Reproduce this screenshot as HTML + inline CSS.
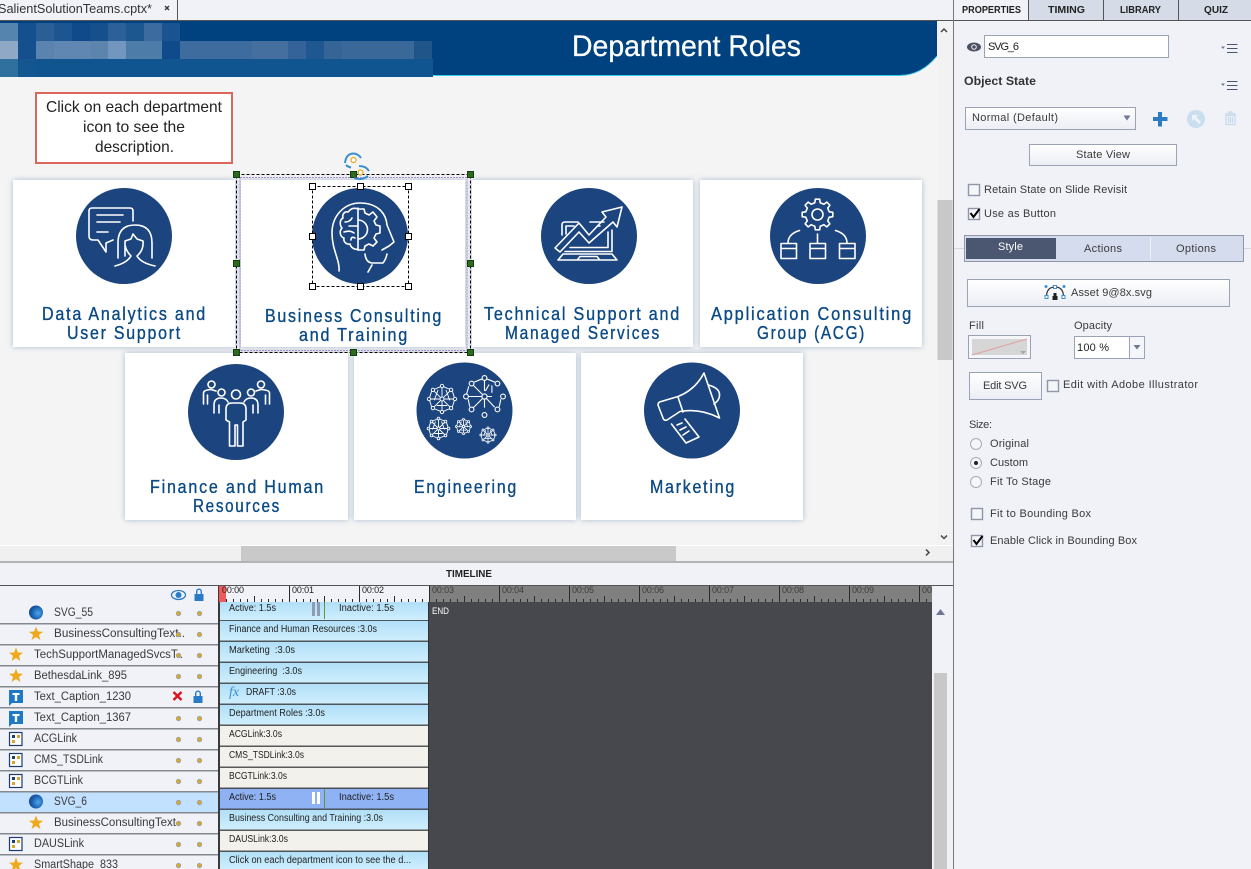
<!DOCTYPE html>
<html><head><meta charset="utf-8"><title>Department Roles</title>
<style>
html,body{margin:0;padding:0;width:1251px;height:869px;overflow:hidden;background:#f0f2f8}
svg{display:block}
text{font-family:"Liberation Sans",sans-serif;fill:#333;font-size:11px;white-space:pre}
.h{font-size:18px;fill:#0b4a85;letter-spacing:2px;stroke:#0b4a85;stroke-width:.35px}
.t{font-size:10px;fill:#222}
.l{font-size:11.5px;fill:#3a3a3a}
.p{font-size:11px;fill:#3a3a3a}
.tab{font-size:10px;font-weight:bold;fill:#222}
.i{fill:none;stroke:#fff;stroke-width:1.6;stroke-linejoin:round;stroke-linecap:round}
.card{fill:#fff;filter:drop-shadow(0 0 3px #a8bbd0)}
.hw{fill:#fff;stroke:#000;stroke-width:1}
.hg{fill:#2c6a1e;stroke:#143d10;stroke-width:1}
.d{fill:#e0a820;stroke:#8fa3b8;stroke-width:.8}
.btn{fill:url(#btn);stroke:#9aa3b5;stroke-width:1}
.cb{fill:#f5f6fa;stroke:#8f96a8;stroke-width:1.4}
</style></head><body>
<svg width="1251" height="869" viewBox="0 0 1251 869" xmlns="http://www.w3.org/2000/svg">
<defs>
<linearGradient id="btn" x1="0" y1="0" x2="0" y2="1"><stop offset="0" stop-color="#ffffff"/><stop offset="1" stop-color="#eceef5"/></linearGradient>
<linearGradient id="bar" x1="0" y1="0" x2="0" y2="1"><stop offset="0" stop-color="#b0dff8"/><stop offset="1" stop-color="#cfeefd"/></linearGradient>
<radialGradient id="sph" cx=".65" cy=".55" r=".7"><stop offset="0" stop-color="#4fa6e6"/><stop offset=".6" stop-color="#1b63b5"/><stop offset="1" stop-color="#103f85"/></radialGradient>
<pattern id="ruler" x="219" y="586" width="70" height="16" patternUnits="userSpaceOnUse">
<path d="M.5 0V16M7.5 13V16M14.5 13V16M21.5 13V16M28.5 13V16M35.5 10V16M42.5 13V16M49.5 13V16M56.5 13V16M63.5 13V16" stroke="#2a2a2a" stroke-width="1" fill="none"/>
</pattern>
<path id="star" d="M0-7.5 1.9-2.5 7.1-2.3 3 .9 4.4 6 0 3-4.4 6-3 .9-7.1-2.3-1.9-2.5Z" fill="#efa91c"/>
<g id="cap"><rect x="0" y="0" width="14" height="13" fill="#1f78c6"/><path d="M0 13v3l3-3z" fill="#1f78c6"/><path d="M3.5 3h7v2h-2.3v6h-2.4v-6h-2.3z" fill="#fff"/></g>
<g id="box"><rect x=".5" y=".5" width="12.5" height="13" fill="#fff" stroke="#1c3d6e" stroke-width="1.2"/><rect x="3" y="3" width="3" height="3" fill="#1c3d6e"/><rect x="8" y="3" width="3" height="3" fill="#d8a72a"/><rect x="3" y="8" width="3" height="3" fill="#d8a72a"/></g>
<g id="net" fill="none" stroke="#fff">
<circle cx="0" cy="0" r="1.5"/><circle cx="0" cy="-10" r="1.3"/><circle cx="7" cy="-7" r="1.3"/><circle cx="10" cy="0" r="1.3"/><circle cx="7" cy="7" r="1.3"/><circle cx="0" cy="10" r="1.3"/><circle cx="-7" cy="7" r="1.3"/><circle cx="-10" cy="0" r="1.3"/><circle cx="-7" cy="-7" r="1.3"/>
<path d="M0-1.5V-8.7M1.1-1.1 6-6M1.5 0H8.7M1.1 1.1 6 6M0 1.5V8.7M-1.1 1.1-6 6M-1.5 0H-8.7M-1.100-1.100-6-6M-3-7-6 1M3-7 6 1M-4 5 4 5M-5.800-7.500-1.200-9.500M1.200-9.500 5.800-7.500M8-6 9.500-1.200M9.500 1.200 8 6M5.800 7.500 1.200 9.500M-1.200 9.500-5.800 7.500M-8 6-9.500 1.200M-9.500-1.200-8-6"/>
</g>
<g id="net2" fill="none" stroke="#fff">
<circle cx="0" cy="0" r="1.4"/><circle cx="0" cy="-10" r="1.3"/><circle cx="7" cy="-7" r="1.3"/><circle cx="10" cy="0" r="1.3"/><circle cx="7" cy="7" r="1.3"/><circle cx="0" cy="10" r="1.3"/><circle cx="-7" cy="7" r="1.3"/><circle cx="-10" cy="0" r="1.3"/><circle cx="-7" cy="-7" r="1.3"/>
<path d="M-1.300 0H-8.700M1.300 0H4M-6-6-1-1M1 1 5.500 5.800M-1 1-6 6M0 1.400V6M0-3V-8.700M4-6V-2M2.500-6.500 .5-3M-8.800 1.500-8 5.500M-5.500-7.800-1.300-9.500M-8.500-5.500-9.700-1.300M8.800 1.500 8 5.500M5.500-7.800 1.300-9.500"/>
</g>
<path id="lock" d="M-4.5-1h9v7h-9zM-3-1v-2.5a3 3 0 0 1 6 0V-1h-1.4v-2.5a1.6 1.6 0 0 0-3.2 0V-1z" fill="#2a7bc6"/>
</defs>

<!-- top tab bar -->
<rect x="0" y="0" width="953" height="20" fill="#f0f2f8"/>
<rect x="0" y="20" width="953" height="1" fill="#555"/>
<rect x="177" y="0" width="1" height="20" fill="#555"/>
<text x="-2" y="13" style="font-size:13px" textLength="154" lengthAdjust="spacingAndGlyphs">SalientSolutionTeams.cptx*</text>
<path d="M165 6l4 4m0-4l-4 4" stroke="#333" stroke-width="1.3"/>

<!-- stage -->
<rect x="0" y="21" width="937" height="525" fill="#f4f4f4"/>
<path d="M0 21H937V56Q921 75 900 75H0Z" fill="#00427f"/>
<path d="M433 75.500H900Q921 75.500 937 56" fill="none" stroke="#35cfe8" stroke-width=".9"/>
<!-- pixelated -->
<g>
<rect x="0" y="23" width="18" height="18" fill="#5585ae"/><rect x="18" y="23" width="18" height="18" fill="#14508e"/><rect x="36" y="23" width="18" height="18" fill="#2a5f96"/><rect x="54" y="23" width="18" height="18" fill="#1c5590"/><rect x="72" y="23" width="18" height="18" fill="#104a8a"/><rect x="90" y="23" width="18" height="18" fill="#154f8c"/><rect x="108" y="23" width="18" height="18" fill="#2d6099"/><rect x="126" y="23" width="18" height="18" fill="#1c5790"/><rect x="144" y="23" width="18" height="18" fill="#3c6c9f"/><rect x="162" y="23" width="18" height="18" fill="#1a5490"/>
<rect x="0" y="41" width="18" height="18" fill="#8fa8c6"/><rect x="18" y="41" width="18" height="18" fill="#154f8d"/><rect x="36" y="41" width="18" height="18" fill="#5b83af"/><rect x="54" y="41" width="36" height="18" fill="#5f87b2"/><rect x="90" y="41" width="18" height="18" fill="#5c84ad"/><rect x="108" y="41" width="18" height="18" fill="#7396bf"/><rect x="126" y="41" width="36" height="18" fill="#4e7ca9"/><rect x="162" y="41" width="18" height="18" fill="#0f4a8a"/>
<rect x="180" y="41" width="126" height="18" fill="#3f6c9f"/><rect x="252" y="41" width="36" height="18" fill="#456f9f"/><rect x="288" y="41" width="18" height="18" fill="#336399"/><rect x="306" y="41" width="18" height="18" fill="#1f5790"/><rect x="324" y="41" width="18" height="18" fill="#356596"/><rect x="342" y="41" width="72" height="18" fill="#3a6898"/><rect x="414" y="41" width="18" height="18" fill="#1f5589"/>
<rect x="0" y="59" width="18" height="18" fill="#30709f"/><rect x="18" y="59" width="18" height="18" fill="#14568f"/><rect x="36" y="59" width="397" height="18" fill="#105490"/>
</g>
<text x="572" y="56" style="font-size:30px;fill:#fff;stroke:#fff;stroke-width:.3px" textLength="229" lengthAdjust="spacingAndGlyphs">Department Roles</text>

<!-- caption -->
<rect x="36" y="93" width="196" height="70" fill="#fff" stroke="#d9675a" stroke-width="2"/>
<text x="46" y="112" style="font-size:16px;fill:#222" textLength="176" lengthAdjust="spacingAndGlyphs">Click on each department</text>
<text x="83" y="132" style="font-size:16px;fill:#222" textLength="102" lengthAdjust="spacingAndGlyphs">icon to see the</text>
<text x="95" y="152" style="font-size:16px;fill:#222" textLength="79" lengthAdjust="spacingAndGlyphs">description.</text>

<!-- cards -->
<rect class="card" x="13" y="180" width="222" height="167"/>
<rect class="card" x="241" y="180" width="224" height="167"/>
<rect class="card" x="472" y="180" width="221" height="167"/>
<rect class="card" x="700" y="180" width="222" height="167"/>
<rect class="card" x="125" y="353" width="223" height="167"/>
<rect class="card" x="354" y="353" width="222" height="167"/>
<rect class="card" x="581" y="353" width="222" height="167"/>

<g fill="#1c447e">
<circle cx="124" cy="236" r="48"/><circle cx="360" cy="236" r="48"/><circle cx="589" cy="236" r="48"/><circle cx="818" cy="236" r="48"/>
<circle cx="236" cy="412" r="48"/><circle cx="464.500" cy="410.500" r="48"/><circle cx="692" cy="410.500" r="48"/>
</g>

<!-- icon 1 -->
<g class="i">
<path d="M133 221V211Q133 208 130 208H92Q89 208 89 211V236Q89 240 93 240H98L106 252V243L113 240"/>
<path d="M97 215H123M97 222H120M97 232H108"/>
<path d="M118 258V243Q118 225 135 225Q152 225 152 243V258"/>
<path d="M125 256V241L131 239 133 234 137 239 143 241Q144 250 137 256 141 263 155 266M125 245Q126 251 131 256 127 263 115 266"/>
</g>
<!-- icon 2 -->
<g class="i">
<path d="M339 271C340 260 332 250 332 233 332 215 345 203 360 203 376 203 386 212 387 225L394 242 389 246 382 250"/>
<path d="M365 254Q366 263 373 263H383Q386 259 387 254M372 265 368 272"/>
<path d="M358 208V250M358 209C352 207 350 210 348 212 344 211 342 215 343 218 339 220 340 226 342 228 339 231 340 237 344 238 343 242 347 245 350 244 351 248 355 250 358 249"/>
<path d="M345 222Q350 222 352 218M344 232Q350 230 354 233M351 240Q351 236 355 238M349 226H358"/>
<path d="M358 209H364L365 213 369 215 373 212 377 217 374 221 376 225 380 226V233L376 234 374 238 377 242 373 246 369 244 365 246 364 250H358M358 220A9.500 9.500 0 0 1 358 239"/>
</g>
<!-- icon 3 -->
<g class="i">
<path d="M555 248 579 223 589 235 606 217 602 212 622 207 617 227 613 222 589 243 579 232 560 252Z"/>
<path d="M562 235V225Q562 222 565 222H578M590 222H604M612 230V251.500H565"/>
<path d="M566 234V226H574M598 226H600M608 232V247.500H570"/>
<path d="M558 260 563 254H612L617 260ZM578 259 580 256.500H597L599 259"/>
</g>
<!-- icon 4 -->
<g class="i">
<path transform="translate(817.500 214.500)" d="M11.700-2.700 15.300-2.200 15.300 2.200 11.700 2.700 10.200 6.400 12.400 9.300 9.300 12.400 6.400 10.200 2.700 11.700 2.200 15.300-2.200 15.300-2.700 11.700-6.400 10.200-9.300 12.400-12.400 9.300-10.200 6.400-11.700 2.700-15.300 2.200-15.300-2.200-11.700-2.700-10.200-6.400-12.400-9.300-9.300-12.400-6.400-10.200-2.700-11.700-2.200-15.300 2.200-15.300 2.700-11.700 6.400-10.200 9.300-12.400 12.400-9.300 10.200-6.400Z"/>
<circle cx="817.500" cy="214.500" r="5.500"/>
<path d="M781 243.500H796.500V258.500H781ZM781 248.500H796.500M810 243.500H825.500V258.500H810ZM810 248.500H825.500M839.500 243.500H855V258.500H839.500ZM839.500 248.500H855"/>
<path d="M817.500 234V243M799.500 230.500Q788 234 788 243M835.500 230.500Q847 234 847 243"/>
</g>
<!-- icon 5 -->
<g class="i" stroke-width="1.400">
<circle cx="236" cy="394.500" r="4.500"/><circle cx="221.500" cy="392.500" r="3.500"/><circle cx="251" cy="392.500" r="3.500"/><circle cx="211.500" cy="384.500" r="3.500"/><circle cx="261" cy="384.500" r="3.500"/>
<path d="M229.500 446V422L226 420V409Q226 403 232 403H240Q246 403 246 409V420L243 422V446H237.500V425H235V446Z"/>
<path d="M214 413V405Q214 398 221 398 226 398 228 402M219 413V405M258 413V405Q258 398 251 398 246 398 244 402M253 413V405"/>
<path d="M203.500 404V393Q203.500 390 211 389.500L216 391M207.500 404V395M269.500 404V393Q269.500 390 261 389.500L256 391M265.500 404V395"/>
</g>
<!-- icon 6 -->
<g stroke-width=".55">
<use href="#net2" transform="translate(484.500 396.500) scale(1.850)" stroke-width=".6"/>
<use href="#net" transform="translate(442 399) scale(1.300)" stroke-width=".7"/>
<use href="#net" transform="translate(438.500 428.500) scale(1)" stroke-width=".9"/>
<use href="#net" transform="translate(463.500 426.500) scale(.72)" stroke-width="1.100"/>
<use href="#net" transform="translate(488 435) scale(.72)" stroke-width="1.100"/>
</g>
<!-- icon 7 -->
<g class="i" stroke-width="1.700">
<path d="M659.500 402 678 396.500Q695 390 704 373L719.500 418Q700 408 680 411.500L667 420Q664 421 663 418L658 405Q658 403 659.500 402Z"/>
<path d="M678 397 683 412M708.500 385Q719 388 719.500 394 720 400 714 404"/>
<path d="M671.500 424 686 443 699 437 685 419M680 430 686 427M683 435 689 431M677 425 682 423"/>
</g>

<!-- card text -->
<text class="h" x="42" y="320" textLength="165" lengthAdjust="spacingAndGlyphs">Data Analytics and</text>
<text class="h" x="67" y="339" textLength="115" lengthAdjust="spacingAndGlyphs">User Support</text>
<text class="h" x="265" y="322" textLength="178" lengthAdjust="spacingAndGlyphs">Business Consulting</text>
<text class="h" x="299" y="341" textLength="110" lengthAdjust="spacingAndGlyphs">and Training</text>
<text class="h" x="484" y="320" textLength="197" lengthAdjust="spacingAndGlyphs">Technical Support and</text>
<text class="h" x="505" y="339" textLength="156" lengthAdjust="spacingAndGlyphs">Managed Services</text>
<text class="h" x="711" y="320" textLength="202" lengthAdjust="spacingAndGlyphs">Application Consulting</text>
<text class="h" x="757" y="339" textLength="109" lengthAdjust="spacingAndGlyphs">Group (ACG)</text>
<text class="h" x="150" y="493" textLength="175" lengthAdjust="spacingAndGlyphs">Finance and Human</text>
<text class="h" x="193" y="512" textLength="88" lengthAdjust="spacingAndGlyphs">Resources</text>
<text class="h" x="414" y="493" textLength="104" lengthAdjust="spacingAndGlyphs">Engineering</text>
<text class="h" x="650" y="493" textLength="86" lengthAdjust="spacingAndGlyphs">Marketing</text>

<!-- selection -->
<rect x="240" y="177.500" width="227" height="173" fill="none" stroke="#a78ccf" stroke-width="1" stroke-dasharray="2 1"/>
<rect x="236.500" y="174.500" width="234" height="178" fill="none" stroke="#000" stroke-width="1" stroke-dasharray="3 2"/>
<g class="hg">
<rect x="233.500" y="171.500" width="6" height="6"/><rect x="350.500" y="171.500" width="6" height="6"/><rect x="467.500" y="171.500" width="6" height="6"/><rect x="233.500" y="260.500" width="6" height="6"/><rect x="467.500" y="260.500" width="6" height="6"/><rect x="233.500" y="349.500" width="6" height="6"/><rect x="350.500" y="349.500" width="6" height="6"/><rect x="467.500" y="349.500" width="6" height="6"/>
</g>
<rect x="312.500" y="186.500" width="96" height="100" fill="none" stroke="#000" stroke-width="1" stroke-dasharray="3 2"/>
<g class="hw">
<rect x="309.500" y="183.500" width="6" height="6"/><rect x="357.500" y="183.500" width="6" height="6"/><rect x="405.500" y="183.500" width="6" height="6"/><rect x="309.500" y="233.500" width="6" height="6"/><rect x="405.500" y="233.500" width="6" height="6"/><rect x="309.500" y="283.500" width="6" height="6"/><rect x="357.500" y="283.500" width="6" height="6"/><rect x="405.500" y="283.500" width="6" height="6"/>
</g>
<!-- rotate -->
<g fill="none" stroke="#3d8fd0" stroke-width="2">
<path d="M345 163Q346 154 353 153.500Q358 153.500 361 158M346 165Q348 167 351 167.500M359 166Q366 166 369 171M354 178Q361 181 368 176"/>
</g>
<circle cx="353.500" cy="160" r="2.500" fill="#fff" stroke="#e0a820" stroke-width="1.200"/>
<circle cx="360.500" cy="172.500" r="2.500" fill="#fff" stroke="#e0a820" stroke-width="1.200"/>

<!-- scrollbars -->
<rect x="937" y="21" width="16" height="525" fill="#f2f2f2"/>
<rect x="937.500" y="200" width="15" height="160" fill="#c8c8c8"/>
<path d="M941 32l3-3 3 3" fill="none" stroke="#444" stroke-width="1.500"/>
<path d="M941 535.500l3 3 3-3" fill="none" stroke="#444" stroke-width="1.500"/>
<rect x="0" y="545" width="953" height="1" fill="#fff"/>
<rect x="0" y="546" width="953" height="16" fill="#f0f0f0"/>
<rect x="241" y="546" width="435" height="15" fill="#c9c9c9"/>
<path d="M926 549.500l3 3-3 3" fill="none" stroke="#444" stroke-width="1.500"/>

<!-- timeline title -->
<rect x="0" y="562" width="953" height="23" fill="#f0f2f8"/>
<rect x="0" y="561.500" width="953" height="1" fill="#777"/>
<rect x="0" y="585" width="953" height="1" fill="#555"/>
<text x="446" y="577" class="tab" style="font-size:10px" textLength="46" lengthAdjust="spacingAndGlyphs">TIMELINE</text>

<!-- timeline left list -->
<rect x="0" y="586" width="219" height="283" fill="#f0f2f8"/>
<rect x="0" y="792" width="218" height="20" fill="#c2e0ff"/>
<g fill="#84888f">
<rect x="0" y="623" width="218" height="1.500"/><rect x="0" y="644" width="218" height="1.500"/><rect x="0" y="665" width="218" height="1.500"/><rect x="0" y="686" width="218" height="1.500"/><rect x="0" y="707" width="218" height="1.500"/><rect x="0" y="728" width="218" height="1.500"/><rect x="0" y="749" width="218" height="1.500"/><rect x="0" y="770" width="218" height="1.500"/><rect x="0" y="791" width="218" height="1.500"/><rect x="0" y="812" width="218" height="1.500"/><rect x="0" y="833" width="218" height="1.500"/><rect x="0" y="854" width="218" height="1.500"/>
</g>
<ellipse cx="178.500" cy="595" rx="7" ry="4.500" fill="none" stroke="#2a7bc6" stroke-width="1.300"/><circle cx="178.500" cy="595" r="3" fill="#2a7bc6"/>
<use href="#lock" transform="translate(199 595)"/>

<circle cx="36" cy="612.500" r="7" fill="url(#sph)"/>
<circle cx="36" cy="801.500" r="7" fill="url(#sph)"/>
<use href="#star" transform="translate(36 634)"/>
<use href="#star" transform="translate(16 655)"/>
<use href="#star" transform="translate(16 676)"/>
<use href="#star" transform="translate(36 823)"/>
<use href="#star" transform="translate(16 865)"/>
<use href="#cap" transform="translate(9 690)"/>
<use href="#cap" transform="translate(9 711)"/>
<use href="#box" transform="translate(9 732)"/>
<use href="#box" transform="translate(9 753)"/>
<use href="#box" transform="translate(9 774)"/>
<use href="#box" transform="translate(9 837)"/>

<text class="l" x="54" y="616" textLength="39" lengthAdjust="spacingAndGlyphs">SVG_55</text>
<text class="l" x="54" y="637" textLength="131" lengthAdjust="spacingAndGlyphs">BusinessConsultingText..</text>
<text class="l" x="34" y="658" textLength="149" lengthAdjust="spacingAndGlyphs">TechSupportManagedSvcsT..</text>
<text class="l" x="34" y="679" textLength="93" lengthAdjust="spacingAndGlyphs">BethesdaLink_895</text>
<text class="l" x="34" y="700" textLength="97" lengthAdjust="spacingAndGlyphs">Text_Caption_1230</text>
<text class="l" x="34" y="721" textLength="97" lengthAdjust="spacingAndGlyphs">Text_Caption_1367</text>
<text class="l" x="34" y="742" textLength="43" lengthAdjust="spacingAndGlyphs">ACGLink</text>
<text class="l" x="34" y="763" textLength="69" lengthAdjust="spacingAndGlyphs">CMS_TSDLink</text>
<text class="l" x="34" y="784" textLength="49" lengthAdjust="spacingAndGlyphs">BCGTLink</text>
<text class="l" x="54" y="805" textLength="33" lengthAdjust="spacingAndGlyphs">SVG_6</text>
<text class="l" x="54" y="826" textLength="122" lengthAdjust="spacingAndGlyphs">BusinessConsultingText</text>
<text class="l" x="34" y="847" textLength="50" lengthAdjust="spacingAndGlyphs">DAUSLink</text>
<text class="l" x="34" y="868" textLength="84" lengthAdjust="spacingAndGlyphs">SmartShape_833</text>

<g class="d">
<circle cx="178.500" cy="613.500" r="2.200"/><circle cx="199.500" cy="613.500" r="2.200"/>
<circle cx="178.500" cy="634.500" r="2.200"/><circle cx="199.500" cy="634.500" r="2.200"/>
<circle cx="178.500" cy="655.500" r="2.200"/><circle cx="199.500" cy="655.500" r="2.200"/>
<circle cx="178.500" cy="676.500" r="2.200"/><circle cx="199.500" cy="676.500" r="2.200"/>
<circle cx="178.500" cy="718.500" r="2.200"/><circle cx="199.500" cy="718.500" r="2.200"/>
<circle cx="178.500" cy="739.500" r="2.200"/><circle cx="199.500" cy="739.500" r="2.200"/>
<circle cx="178.500" cy="760.500" r="2.200"/><circle cx="199.500" cy="760.500" r="2.200"/>
<circle cx="178.500" cy="781.500" r="2.200"/><circle cx="199.500" cy="781.500" r="2.200"/>
<circle cx="178.500" cy="802.500" r="2.200"/><circle cx="199.500" cy="802.500" r="2.200"/>
<circle cx="178.500" cy="823.500" r="2.200"/><circle cx="199.500" cy="823.500" r="2.200"/>
<circle cx="178.500" cy="844.500" r="2.200"/><circle cx="199.500" cy="844.500" r="2.200"/>
<circle cx="178.500" cy="865.500" r="2.200"/><circle cx="199.500" cy="865.500" r="2.200"/>
</g>
<path d="M173.500 692l8 8m0-8l-8 8" stroke="#d8141c" stroke-width="2.400" fill="none"/>
<use href="#lock" transform="translate(198 697)"/>

<!-- bars -->
<rect x="218" y="586" width="2" height="283" fill="#3a3a3a"/>
<rect x="220" y="602" width="209" height="267" fill="#333"/>
<rect x="220" y="602" width="208" height="18" fill="url(#bar)"/>
<rect x="220" y="620.800" width="208" height="19.800" fill="url(#bar)"/>
<rect x="220" y="641.800" width="208" height="19.800" fill="url(#bar)"/>
<rect x="220" y="662.800" width="208" height="19.800" fill="url(#bar)"/>
<rect x="220" y="683.800" width="208" height="19.800" fill="url(#bar)"/>
<rect x="220" y="704.800" width="208" height="19.800" fill="url(#bar)"/>
<rect x="220" y="725.800" width="208" height="19.800" fill="#f3f1ec"/>
<rect x="220" y="746.800" width="208" height="19.800" fill="#f3f1ec"/>
<rect x="220" y="767.800" width="208" height="19.800" fill="#f3f1ec"/>
<rect x="220" y="788.800" width="208" height="19.800" fill="#8fb2f5"/>
<rect x="220" y="809.800" width="208" height="19.800" fill="url(#bar)"/>
<rect x="220" y="830.800" width="208" height="19.800" fill="#f3f1ec"/>
<rect x="220" y="851.800" width="208" height="17.200" fill="url(#bar)"/>

<rect x="312" y="602" width="3" height="14" fill="#8e9bb3"/><rect x="317" y="602" width="3" height="14" fill="#8e9bb3"/><rect x="324" y="602" width="1" height="17" fill="#5b9a3a"/>
<rect x="312" y="792" width="3" height="12" fill="#fff"/><rect x="317" y="792" width="3" height="12" fill="#fff"/><rect x="324" y="789" width="1" height="19" fill="#5b9a3a"/>

<g>
<text class="t" x="229" y="611" textLength="47" lengthAdjust="spacingAndGlyphs">Active: 1.5s</text>
<text class="t" x="339" y="611" textLength="55" lengthAdjust="spacingAndGlyphs">Inactive: 1.5s</text>
<text class="t" x="229" y="632" textLength="148" lengthAdjust="spacingAndGlyphs">Finance and Human Resources :3.0s</text>
<text class="t" x="229" y="653" textLength="66" lengthAdjust="spacingAndGlyphs">Marketing  :3.0s</text>
<text class="t" x="229" y="674" textLength="73" lengthAdjust="spacingAndGlyphs">Engineering  :3.0s</text>
<text x="229" y="696" style="font-family:'Liberation Serif',serif;font-style:italic;font-size:14px;fill:#3a8fd0">fx</text>
<text class="t" x="246" y="695" textLength="50" lengthAdjust="spacingAndGlyphs">DRAFT :3.0s</text>
<text class="t" x="229" y="716" textLength="96" lengthAdjust="spacingAndGlyphs">Department Roles :3.0s</text>
<text class="t" x="229" y="737" textLength="53" lengthAdjust="spacingAndGlyphs">ACGLink:3.0s</text>
<text class="t" x="229" y="758" textLength="75" lengthAdjust="spacingAndGlyphs">CMS_TSDLink:3.0s</text>
<text class="t" x="229" y="779" textLength="58" lengthAdjust="spacingAndGlyphs">BCGTLink:3.0s</text>
<text class="t" x="229" y="800" textLength="47" lengthAdjust="spacingAndGlyphs">Active: 1.5s</text>
<text class="t" x="339" y="800" textLength="55" lengthAdjust="spacingAndGlyphs">Inactive: 1.5s</text>
<text class="t" x="229" y="821" textLength="154" lengthAdjust="spacingAndGlyphs">Business Consulting and Training :3.0s</text>
<text class="t" x="229" y="842" textLength="59" lengthAdjust="spacingAndGlyphs">DAUSLink:3.0s</text>
<text class="t" x="229" y="863" textLength="182" lengthAdjust="spacingAndGlyphs">Click on each department icon to see the d...</text>
</g>

<!-- dark track + ruler -->
<rect x="429" y="602" width="503" height="267" fill="#47484d"/>
<rect x="219" y="586" width="210" height="16" fill="#f0f2f8"/>
<rect x="429" y="586" width="503" height="16" fill="#808080"/>
<rect x="219" y="586" width="713" height="16" fill="url(#ruler)"/>
<rect x="219" y="586" width="7" height="16" fill="#ee5a5a"/>
<g style="font-size:9px">
<text class="t" x="222" y="593" style="font-size:9px" textLength="22">00:00</text>
<text class="t" x="292" y="593" style="font-size:9px" textLength="22">00:01</text>
<text class="t" x="362" y="593" style="font-size:9px" textLength="22">00:02</text>
<text class="t" x="432" y="593" style="font-size:9px;fill:#3c3c3c" textLength="22">00:03</text>
<text class="t" x="502" y="593" style="font-size:9px;fill:#3c3c3c" textLength="22">00:04</text>
<text class="t" x="572" y="593" style="font-size:9px;fill:#3c3c3c" textLength="22">00:05</text>
<text class="t" x="642" y="593" style="font-size:9px;fill:#3c3c3c" textLength="22">00:06</text>
<text class="t" x="712" y="593" style="font-size:9px;fill:#3c3c3c" textLength="22">00:07</text>
<text class="t" x="782" y="593" style="font-size:9px;fill:#3c3c3c" textLength="22">00:08</text>
<text class="t" x="852" y="593" style="font-size:9px;fill:#3c3c3c" textLength="22">00:09</text>
<text class="t" x="922" y="593" style="font-size:9px;fill:#3c3c3c">00</text>
</g>
<text x="432" y="614" style="font-size:9px;fill:#fff" textLength="17" lengthAdjust="spacingAndGlyphs">END</text>
<rect x="932" y="586" width="21" height="283" fill="#f0f2f8"/>
<path d="M936 615l4.500-6 4.500 6z" fill="#6d7893"/>
<rect x="934" y="673" width="13" height="196" fill="#c8c8c8"/>

<!-- right panel -->
<rect x="954" y="0" width="297" height="869" fill="#f0f2f8"/>
<rect x="953" y="0" width="1" height="869" fill="#777"/>
<rect x="1028" y="0" width="223" height="20" fill="#d5dce8"/>
<rect x="1028" y="0" width="1" height="20" fill="#555"/><rect x="1103" y="0" width="1" height="20" fill="#555"/><rect x="1178" y="0" width="1" height="20" fill="#555"/>
<rect x="954" y="20" width="297" height="1" fill="#555"/>
<text class="tab" x="962" y="13" textLength="59" lengthAdjust="spacingAndGlyphs">PROPERTIES</text>
<text class="tab" x="1048" y="13" textLength="37" lengthAdjust="spacingAndGlyphs">TIMING</text>
<text class="tab" x="1120" y="13" textLength="41" lengthAdjust="spacingAndGlyphs">LIBRARY</text>
<text class="tab" x="1204" y="13" textLength="24" lengthAdjust="spacingAndGlyphs">QUIZ</text>

<ellipse cx="974" cy="47" rx="7" ry="4.500" fill="#4b5060"/><circle cx="974" cy="47" r="2.800" fill="#f0f2f8"/><circle cx="974" cy="47" r="1.800" fill="#4b5060"/>
<rect x="984.500" y="35.500" width="184" height="22" fill="#fff" stroke="#9aa3b5"/>
<text class="p" x="988" y="50" textLength="31" style="fill:#222">SVG_6</text>
<path d="M1227 44.500h10.500M1227 48.500h10.500M1227 52.500h10.500M1227 81.500h10.500M1227 85.500h10.500M1227 89.500h10.500" stroke="#4b5570"/>
<path d="M1221 46.500h4l-2 2.500zM1221 83.500h4l-2 2.500z" fill="#6d7893"/>
<text x="964" y="85" style="font-size:11.500px;font-weight:bold;fill:#333" textLength="72" lengthAdjust="spacingAndGlyphs">Object State</text>

<rect class="btn" x="965.500" y="107.500" width="170" height="22"/>
<text class="p" x="972" y="121" textLength="86">Normal (Default)</text>
<path d="M1123.500 115.500h7l-3.500 5z" fill="#6d7893"/>
<path d="M1158 112h4v5h5.500v4h-5.500v5.500h-4v-5.500h-5v-4h5z" fill="#2b7cc4"/>
<circle cx="1196" cy="119" r="9" fill="#c9dff0"/><path d="M1192 115h6l-2 2 5 5-2 2-5-5-2 2z" fill="#f0f2f8"/>
<path d="M1225 114h11M1229 114v-2h3v2M1226 115.500h9v9h-9zM1228.500 117v6M1230.500 117v6M1232.500 117v6" fill="none" stroke="#c4d9ea" stroke-width="1.200"/>

<rect class="btn" x="1029.500" y="144.500" width="147" height="21"/>
<text class="p" x="1076" y="158" textLength="54">State View</text>

<rect class="cb" x="968.500" y="184.500" width="11" height="11"/>
<text class="p" x="984" y="193" textLength="143">Retain State on Slide Revisit</text>
<rect class="cb" x="968.500" y="208.500" width="11" height="11"/>
<path d="M970.500 213l3 4 6-8" fill="none" stroke="#000" stroke-width="2"/>
<text class="p" x="984" y="217" textLength="72">Use as Button</text>

<rect x="954" y="248" width="10" height="1" fill="#d5d8e0"/><rect x="1244" y="248" width="7" height="1" fill="#d5d8e0"/>
<rect x="964.500" y="235.500" width="279" height="26" fill="#d5dcee" stroke="#8f96a8"/>
<rect x="966" y="238" width="90" height="21" fill="#4b5670"/>
<rect x="1150" y="237" width="1" height="23" fill="#eef0f7"/>
<text class="p" x="998" y="250" style="fill:#fff" textLength="25">Style</text>
<text class="p" x="1084" y="252" textLength="38">Actions</text>
<text class="p" x="1176" y="252" textLength="40">Options</text>

<rect class="btn" x="967.500" y="279.500" width="262" height="27"/>
<path d="M1046.500 296Q1047 287 1055 287T1063.500 296" fill="none" stroke="#333" stroke-width="1.200"/>
<path d="M1053.500 293h3v3h1v4h-5v-4h1z" fill="#222"/>
<g fill="#fff" stroke="#3d8fd0"><rect x="1045" y="295.500" width="3" height="3"/><rect x="1062" y="295.500" width="3" height="3"/><rect x="1053.500" y="285.500" width="3" height="3"/></g>
<g fill="#3d8fd0"><circle cx="1046" cy="286.500" r="1.500"/><circle cx="1064" cy="286.500" r="1.500"/></g>
<text class="p" x="1071" y="296" textLength="81">Asset 9@8x.svg</text>

<text class="p" x="969" y="329" textLength="15">Fill</text>
<text class="p" x="1074" y="329" textLength="38">Opacity</text>
<rect x="968.500" y="335.500" width="62" height="23" fill="#f5f6fa" stroke="#9aa3b5"/>
<rect x="972" y="339" width="55" height="16" fill="#d6d6d6"/>
<path d="M972 355 1027 339" stroke="#e0a0a0" stroke-width="1"/>
<path d="M1020 351h6l-3 3.500z" fill="#aaa"/>
<rect x="1074.500" y="336.500" width="70" height="22" fill="#fff" stroke="#9aa3b5"/>
<rect x="1129" y="337" width="1" height="21" fill="#9aa3b5"/><rect x="1130" y="337" width="14" height="21" fill="#f5f6fa"/>
<path d="M1133.500 345h7l-3.500 4.500z" fill="#6d7893"/>
<text class="p" x="1077" y="351" textLength="32" style="fill:#222">100 %</text>

<rect class="btn" x="969.500" y="372.500" width="72" height="27"/>
<text class="p" x="983" y="389" textLength="44">Edit SVG</text>
<rect class="cb" x="1047.500" y="380.500" width="11" height="11"/>
<text class="p" x="1063" y="388" textLength="135">Edit with Adobe Illustrator</text>

<text class="p" x="969" y="428" textLength="23">Size:</text>
<g fill="#f5f6fa" stroke="#a5abb8"><circle cx="976" cy="444" r="5.500"/><circle cx="976" cy="463" r="5.500"/><circle cx="976" cy="482" r="5.500"/></g>
<circle cx="976" cy="463" r="2" fill="#222"/>
<text class="p" x="990" y="447" textLength="39">Original</text>
<text class="p" x="990" y="466" textLength="38">Custom</text>
<text class="p" x="990" y="485" textLength="61">Fit To Stage</text>

<rect class="cb" x="971.500" y="508.500" width="11" height="11"/>
<text class="p" x="990" y="517" textLength="101">Fit to Bounding Box</text>
<rect class="cb" x="971.500" y="535.500" width="11" height="11"/>
<path d="M973.500 540l3 4 6-8" fill="none" stroke="#000" stroke-width="2"/>
<text class="p" x="990" y="544" textLength="147">Enable Click in Bounding Box</text>
</svg>
</body></html>
